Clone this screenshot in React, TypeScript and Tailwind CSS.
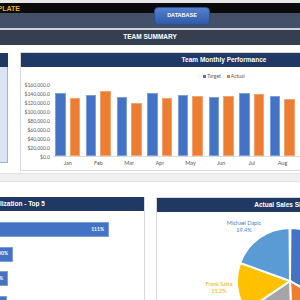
import React from 'react';

const MONTHS = ['Jan', 'Feb', 'Mar', 'Apr', 'May', 'Jun', 'Jul', 'Aug', 'Sep', 'Oct', 'Nov', 'Dec'];
const TARGET = [140, 135, 131, 140, 135, 131, 140, 133, 138, 134, 136, 140];
const ACTUAL = [129, 144, 118, 129, 133, 133, 138, 127, 131, 142, 125, 137];
const AXIS = ['$160,000.0', '$140,000.0', '$120,000.0', '$100,000.0', '$80,000.0', '$60,000.0', '$40,000.0', '$20,000.0', '$0.0'];
const MAX_VALUE = 160;
const PLOT_H = 72;

const UTILIZATION = [
    { width: 109, label: '111%' },
    { width: 13, label: '100%' },
    { width: 8, label: '98%' },
    { width: 7, label: '95%' },
];

const SLICES = [
    { from: 0.5, to: 120, color: '#4472c4' },
    { from: 120, to: 178, color: '#ed7d31' },
    { from: 178, to: 236, color: '#a5a5a5' },
    { from: 236, to: 290, color: '#ffc000' },
    { from: 290, to: 359.5, color: '#5b9bd5' },
];

const slicePath = (cx: number, cy: number, r: number, from: number, to: number) => {
    const rad = (a: number) => (a * Math.PI) / 180;
    const x1 = cx + r * Math.sin(rad(from));
    const y1 = cy - r * Math.cos(rad(from));
    const x2 = cx + r * Math.sin(rad(to));
    const y2 = cy - r * Math.cos(rad(to));
    const large = to - from > 180 ? 1 : 0;
    return `M${cx} ${cy} L${x1} ${y1} A${r} ${r} 0 ${large} 1 ${x2} ${y2} Z`;
};

const PanelHeader: React.FC<{ children: React.ReactNode }> = ({ children }) => (
    <div className="h-[14px] bg-[#203864] flex items-center justify-center text-white font-bold text-[6.5px] leading-none whitespace-nowrap">
        {children}
    </div>
);

const MonthlyChart: React.FC = () => (
    <div className="w-[408px] shrink-0 border border-[#d9d9d9] bg-white">
        <PanelHeader>Team Monthly Performance</PanelHeader>
        <div className="h-[103px] pt-[6px] font-['Lato',sans-serif] text-[#595959]">
            <div className="h-[6px] flex items-center justify-center gap-[6px] text-[5px] leading-none">
                <span className="flex items-center gap-[1px]">
                    <span className="w-[3px] h-[3px] bg-[#4472c4]" />Target
                </span>
                <span className="flex items-center gap-[1px]">
                    <span className="w-[3px] h-[3px] bg-[#ed7d31]" />Actual
                </span>
            </div>
            <div className="flex mt-[3px]">
                <div className="w-[29px] h-[78px] flex flex-col justify-between items-end text-[5px] leading-[6px]">
                    {AXIS.map((a) => (
                        <span key={a}>{a}</span>
                    ))}
                </div>
                <div className="ml-[2.5px] w-[368px]">
                    <div className="h-[72px] mt-[3px] grid grid-cols-12 items-end border-b border-[#d9d9d9]">
                        {MONTHS.map((m, i) => (
                            <div key={m} className="flex items-end justify-center gap-[4px]">
                                <div
                                    className="w-[10.5px] bg-[#4472c4] border border-[#7b9edc]"
                                    style={{ height: `${(TARGET[i] / MAX_VALUE) * PLOT_H}px` }}
                                />
                                <div
                                    className="w-[10.5px] bg-[#ed7d31] border border-[#f3a470]"
                                    style={{ height: `${(ACTUAL[i] / MAX_VALUE) * PLOT_H}px` }}
                                />
                            </div>
                        ))}
                    </div>
                    <div className="grid grid-cols-12 mt-[3px] text-[5.5px] leading-[6px] text-center">
                        {MONTHS.map((m) => (
                            <span key={m}>{m}</span>
                        ))}
                    </div>
                </div>
            </div>
        </div>
    </div>
);

const SalesShare: React.FC = () => (
    <div className="w-[254px] shrink-0 border-l border-t border-[#d9d9d9] bg-white">
        <PanelHeader>Actual Sales Share</PanelHeader>
        <svg width="150" height="90" className="block font-['Lato',sans-serif]">
            {SLICES.map((s) => (
                <path key={s.color} d={slicePath(133, 69, 53, s.from, s.to)} fill={s.color} stroke="#ffffff" strokeWidth="2" />
            ))}
            <text x="87" y="13" textAnchor="middle" fontSize="5.5" fill="#4a7fc4">Michael Dapic</text>
            <text x="87" y="19.5" textAnchor="middle" fontSize="5.5" fill="#4a7fc4">19.4%</text>
            <text x="62" y="74" textAnchor="middle" fontSize="5.5" fill="#f0b000">Frank Salsa</text>
            <text x="62" y="80.5" textAnchor="middle" fontSize="5.5" fill="#f0b000">15.2%</text>
        </svg>
    </div>
);

const Utilization: React.FC = () => (
    <div className="w-[145px] shrink-0 border-r border-[#d9d9d9] bg-white">
        <div className="h-[14px] bg-[#203864] flex items-center">
            <div className="w-[45px] flex justify-end overflow-hidden whitespace-nowrap text-white font-bold text-[6.5px] leading-none">
                Team Quota Utilization - Top 5
            </div>
        </div>
        <div className="pt-[11px] flex flex-col gap-[9.5px]">
            {UTILIZATION.map((u) => (
                <div
                    key={u.label}
                    className="h-[15px] bg-[#4472c4] border border-[#7b9edc] border-l-0 flex items-center justify-end pr-[4px] text-white text-[5px] font-bold whitespace-nowrap font-['Lato',sans-serif]"
                    style={{ width: `${u.width}px` }}
                >
                    {u.label}
                </div>
            ))}
        </div>
    </div>
);

export default function App() {
    return (
        <div className="w-[300px] h-[300px] overflow-hidden bg-white relative font-['Liberation_Sans',Arial,sans-serif]">
            <div className="h-[3px] bg-[#e7e7e7]" />
            <div className="h-[10px] bg-[#0b0b0b] flex items-center">
                <div className="w-[20px] flex justify-end overflow-hidden whitespace-nowrap text-[7px] font-bold text-[#e8b020] leading-none">
                    SALES DASHBOARD TEMPLATE
                </div>
            </div>
            <div className="h-[15px] bg-[#435068]" />
            <div className="h-[2px] bg-[#cfd4dc]" />
            <div className="h-[15px] bg-[#363f4f] flex items-center justify-center text-white font-bold text-[6.5px] leading-none">
                TEAM SUMMARY
            </div>
            <button className="absolute left-[154px] top-[7px] w-[56px] h-[18px] rounded-[4px] bg-gradient-to-b from-[#5581d0] to-[#2f5aa6] border border-[#2a4f94] flex items-center justify-center text-white font-bold text-[5.5px] leading-none">
                DATABASE
            </button>

            <div className="flex gap-[12px] mt-[7px]">
                <div className="w-[8px] shrink-0 mt-[1px]">
                    <div className="h-[14px] bg-[#203864]" />
                    <div className="h-[96px] bg-[#dae3f3] border-r border-b border-[#9db3dc]" />
                </div>
                <MonthlyChart />
            </div>

            <div className="mt-[2px] h-[9px] bg-[#f0f0f0] border-t border-[#e2e2e2] border-b border-[#c9c9c9]" />

            <div className="flex gap-[11px] mt-[15px]">
                <Utilization />
                <SalesShare />
            </div>
        </div>
    );
}
